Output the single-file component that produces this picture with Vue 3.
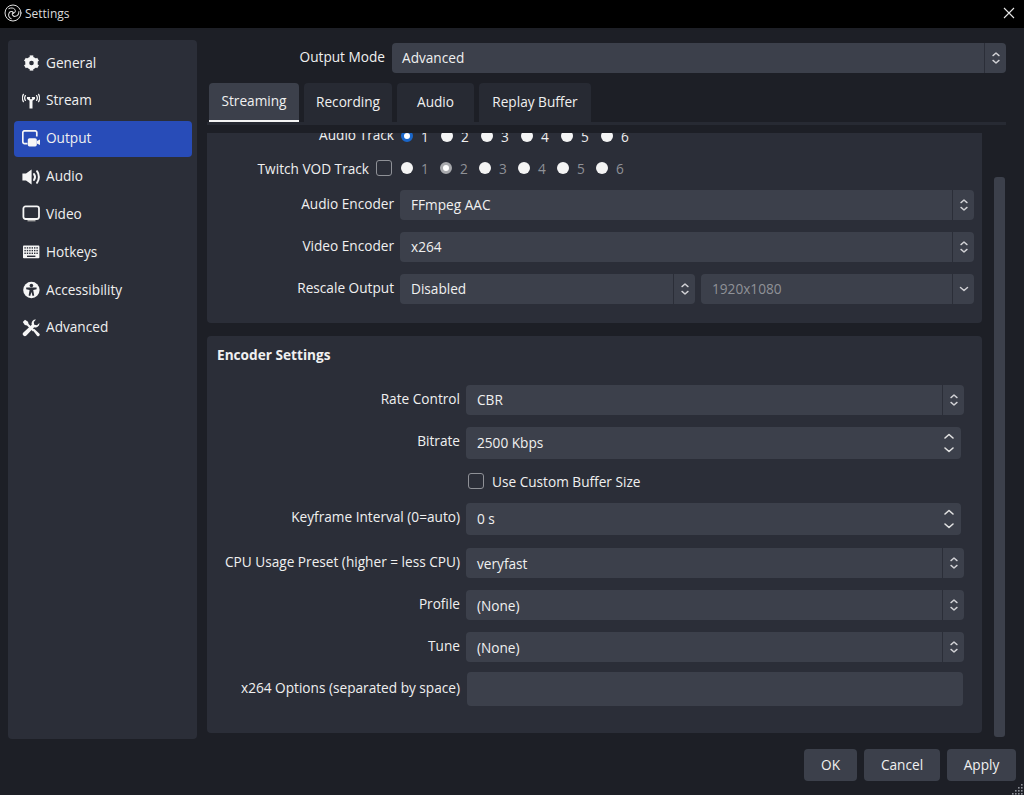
<template>
  <div class="window">
    <svg width="0" height="0" class="defs" aria-hidden="true">
      <defs>
        <g id="updown" fill="none" stroke="currentColor" stroke-width="1.4" stroke-linecap="round" stroke-linejoin="round">
          <path d="M2 5.6 L5 3 L8 5.6" />
          <path d="M2 10.4 L5 13 L8 10.4" />
        </g>
      </defs>
    </svg>

    <header class="titlebar">
      <svg class="logo" viewBox="0 0 18 18">
        <g fill="none" stroke="#e0e0e0" stroke-width="1" stroke-linecap="round">
          <circle cx="9" cy="9" r="8" />
          <path v-for="a in [0, 120, 240]" :key="a" d="M9 9.6 C11.2 9.4 12 7 10.8 5.4 C9.6 3.8 7 3.4 4.8 4.6" :transform="`rotate(${a} 9 9)`" />
        </g>
      </svg>
      <span class="windowTitle">Settings</span>
      <svg class="closeIcon" viewBox="0 0 12 12">
        <path d="M1 1 L11 11 M11 1 L1 11" stroke="#e6e6e6" stroke-width="1.1" fill="none" />
      </svg>
    </header>

    <div class="content">
      <nav class="sidebar">
        <div v-for="item in navItems" :key="item" class="navItem" :class="{ active: item === 'Output' }">
          <svg class="navIcon" viewBox="0 0 18 18">
            <template v-if="item === 'General'">
              <circle cx="9.5" cy="9" r="4.3" fill="none" stroke="#f6f6f6" stroke-width="4" />
              <g fill="#f6f6f6">
                <rect v-for="a in [0, 60, 120, 180, 240, 300]" :key="a" x="7.7" y="1.4" width="3.6" height="3" :transform="`rotate(${a} 9.5 9)`" />
              </g>
            </template>
            <template v-else-if="item === 'Stream'">
              <path d="M5 5 H13 V7 L10.5 8.8 V16.4 H7.5 V8.8 L5 7 Z" fill="#f6f6f6" />
              <circle cx="9" cy="6.2" r="1.1" fill="#2b2e38" />
              <path d="M3.4 3.6 C2.5 5 2.5 7 3.4 8.4 M14.6 3.6 C15.5 5 15.5 7 14.6 8.4 M1.4 2.4 C0 4.8 0 7.2 1.4 9.6 M16.6 2.4 C18 4.8 18 7.2 16.6 9.6" fill="none" stroke="#f0f0f0" stroke-width="1.3" stroke-linecap="round" />
            </template>
            <template v-else-if="item === 'Output'">
              <path d="M5.5 13.6 H2.6 A1.8 1.8 0 0 1 0.8 11.8 V2.6 A1.8 1.8 0 0 1 2.6 0.8 H13 A1.8 1.8 0 0 1 14.8 2.6 V6.4" fill="none" stroke="#f6f6f6" stroke-width="1.7" />
              <rect x="5.8" y="8.2" width="9" height="8.2" rx="1.6" fill="#f6f6f6" />
              <path d="M14.8 11 L18 9.6 V15 L14.8 13.6 Z" fill="#f6f6f6" />
            </template>
            <template v-else-if="item === 'Audio'">
              <path d="M0.4 5.6 H4 L9.6 1.4 V16.6 L4 12.4 H0.4 Z" fill="#f6f6f6" />
              <path d="M12 6 C13.1 7.6 13.1 10.4 12 12 M15 3.2 C17.5 6.4 17.5 11.6 15 14.8" fill="none" stroke="#f6f6f6" stroke-width="2" stroke-linecap="round" />
            </template>
            <template v-else-if="item === 'Video'">
              <rect x="1.4" y="1.4" width="15.6" height="12.6" rx="2.2" fill="none" stroke="#f6f6f6" stroke-width="1.8" />
              <rect x="5.5" y="15" width="8" height="1.4" fill="#a8a8a8" />
            </template>
            <template v-else-if="item === 'Hotkeys'">
              <rect x="1" y="2.6" width="16.4" height="12.6" rx="0.8" fill="#f6f6f6" />
              <g fill="#2b2e38">
                <rect v-for="k in keyDots" :key="k.x + '-' + k.y" :x="k.x" :y="k.y" width="1.4" height="1.4" />
                <rect x="5" y="12.6" width="8.4" height="1.4" />
              </g>
            </template>
            <template v-else-if="item === 'Accessibility'">
              <circle cx="9.4" cy="9" r="8.2" fill="#f6f6f6" />
              <circle cx="9.4" cy="4.6" r="1.8" fill="#2b2e38" />
              <path d="M4.2 6.6 L14.6 6.6 L14.6 8.2 L11.2 9 L12.2 14.6 L10.6 15 L9.4 11 L8.2 15 L6.6 14.6 L7.6 9 L4.2 8.2 Z" fill="#2b2e38" />
            </template>
            <template v-else>
              <path d="M3 0.8 L0.8 3 L2.8 6 L5 6.6 L11 12.6 L12.6 11 L6.6 5 L6 2.8 Z" fill="#f6f6f6" />
              <path d="M11 11.4 L15 16.8 A1.5 1.5 0 0 0 17.2 14.6 L12.4 10 Z" fill="#f6f6f6" />
              <path d="M14 0.6 A4 4 0 0 0 9.8 5.8 L1.4 13.6 A2 2 0 0 0 4.4 16.6 L12.2 8.2 A4 4 0 0 0 17.4 4 L15 6.2 L12.2 5.8 L11.8 3 Z" fill="#f6f6f6" />
            </template>
          </svg>
          <span>{{ item }}</span>
        </div>
      </nav>

      <main class="main">
        <div class="modeRow">
          <span class="fieldLabel">Output Mode</span>
          <div class="combo">
            <span class="comboText">Advanced</span>
            <span class="comboArrow"><svg class="chev" viewBox="0 0 10 16"><use href="#updown" /></svg></span>
          </div>
        </div>

        <div class="tabs">
          <div v-for="tab in tabs" :key="tab.name" class="tab" :class="{ current: tab.name === 'Streaming' }" :style="{ width: tab.width + 'px' }">{{ tab.name }}</div>
        </div>
        <div class="tabLine"></div>

        <div class="scrollArea">
          <div class="viewport">
            <section class="panel streamPanel">
              <div class="trackRow audioRow">
                <span class="fieldLabel">Audio Track</span>
                <div class="radios">
                  <span v-for="n in 6" :key="n" class="radioItem">
                    <i class="radio" :class="{ on: n === 1 }"></i>{{ n }}
                  </span>
                </div>
              </div>
              <div class="trackRow vodRow">
                <span class="fieldLabel"><span>Twitch VOD Track</span><i class="check"></i></span>
                <div class="radios muted">
                  <span v-for="n in 6" :key="n" class="radioItem">
                    <i class="radio" :class="{ off: n === 2 }"></i>{{ n }}
                  </span>
                </div>
              </div>
              <div class="formRow">
                <span class="fieldLabel">Audio Encoder</span>
                <div class="combo">
                  <span class="comboText">FFmpeg AAC</span>
                  <span class="comboArrow"><svg class="chev" viewBox="0 0 10 16"><use href="#updown" /></svg></span>
                </div>
              </div>
              <div class="formRow">
                <span class="fieldLabel">Video Encoder</span>
                <div class="combo">
                  <span class="comboText">x264</span>
                  <span class="comboArrow"><svg class="chev" viewBox="0 0 10 16"><use href="#updown" /></svg></span>
                </div>
              </div>
              <div class="formRow">
                <span class="fieldLabel">Rescale Output</span>
                <div class="rescale">
                  <div class="combo">
                    <span class="comboText">Disabled</span>
                    <span class="comboArrow"><svg class="chev" viewBox="0 0 10 16"><use href="#updown" /></svg></span>
                  </div>
                  <div class="combo disabled">
                    <span class="comboText">1920x1080</span>
                    <span class="comboArrow">
                      <svg class="chev" viewBox="0 0 10 16"><path d="M1.5 6.5 L5 9.5 L8.5 6.5" fill="none" stroke="currentColor" stroke-width="1.5" stroke-linecap="round" stroke-linejoin="round" /></svg>
                    </span>
                  </div>
                </div>
              </div>
            </section>

            <section class="panel encoderPanel">
              <h3 class="panelTitle">Encoder Settings</h3>
              <div class="encoderRows">
                <div v-for="row in encoderRows" :key="row.label + row.type" class="encoderRow" :class="'row-' + row.type">
                  <span class="fieldLabel">{{ row.label }}</span>
                  <div v-if="row.type === 'combo'" class="combo">
                    <span class="comboText">{{ row.value }}</span>
                    <span class="comboArrow"><svg class="chev" viewBox="0 0 10 16"><use href="#updown" /></svg></span>
                  </div>
                  <div v-else-if="row.type === 'spin'" class="spinBox">
                    <span class="comboText">{{ row.value }}</span>
                    <span class="spinArrows">
                      <svg class="spinChev" viewBox="0 0 12 8"><path d="M2 6 L6 2.5 L10 6" /></svg>
                      <svg class="spinChev" viewBox="0 0 12 8"><path d="M2 2 L6 5.5 L10 2" /></svg>
                    </span>
                  </div>
                  <label v-else-if="row.type === 'check'" class="checkField"><i class="check"></i>{{ row.value }}</label>
                  <div v-else class="textInput"></div>
                </div>
              </div>
            </section>
          </div>
          <div class="scrollTrack"><div class="scrollThumb"></div></div>
        </div>
      </main>
    </div>

    <footer class="footer">
      <button class="btn okBtn" type="button">OK</button>
      <button class="btn cancelBtn" type="button">Cancel</button>
      <button class="btn applyBtn" type="button">Apply</button>
      <svg class="grip" viewBox="0 0 12 12">
        <g fill="#8c8f96">
          <rect v-for="d in gripDots" :key="d[0] + '-' + d[1]" :x="d[0]" :y="d[1]" width="1.6" height="1.6" />
        </g>
      </svg>
    </footer>
  </div>
</template>

<script setup>
const navItems = ['General', 'Stream', 'Output', 'Audio', 'Video', 'Hotkeys', 'Accessibility', 'Advanced']

const tabs = [
  { name: 'Streaming', width: 90 },
  { name: 'Recording', width: 88 },
  { name: 'Audio', width: 77 },
  { name: 'Replay Buffer', width: 112 }
]

const encoderRows = [
  { label: 'Rate Control', type: 'combo', value: 'CBR' },
  { label: 'Bitrate', type: 'spin', value: '2500 Kbps' },
  { label: '', type: 'check', value: 'Use Custom Buffer Size' },
  { label: 'Keyframe Interval (0=auto)', type: 'spin', value: '0 s' },
  { label: 'CPU Usage Preset (higher = less CPU)', type: 'combo', value: 'veryfast' },
  { label: 'Profile', type: 'combo', value: '(None)' },
  { label: 'Tune', type: 'combo', value: '(None)' },
  { label: 'x264 Options (separated by space)', type: 'input' }
]

const keyDots = []
for (const y of [4.2, 6.9, 9.6]) {
  for (let x = 2.4; x < 15.5; x += 2.4) keyDots.push({ x, y })
}

const gripDots = [[9, 1], [6, 4], [9, 4], [3, 7], [6, 7], [9, 7], [0, 10], [3, 10], [6, 10], [9, 10]]
</script>

<style scoped>
.window {
  width: 1024px;
  height: 795px;
  display: flex;
  flex-direction: column;
  overflow: hidden;
  background: #1d1f26;
  color: #f0f0f0;
  font-family: "Open Sans", "Noto Sans", sans-serif;
  font-size: 13.65px;
}

.defs {
  position: absolute;
}

.titlebar {
  flex: none;
  height: 28px;
  display: flex;
  align-items: center;
  padding: 0 9px 2px 4px;
  box-sizing: border-box;
  background: #000;
}

.logo {
  width: 18px;
  height: 18px;
  margin-right: 3px;
}

.windowTitle {
  font-size: 12px;
  color: #dcdcdc;
}

.closeIcon {
  width: 12px;
  height: 12px;
  margin-left: auto;
}

.content {
  flex: none;
  height: 700px;
  margin-top: 12px;
  padding: 0 18px 0 8px;
  display: flex;
  gap: 10px;
}

.sidebar {
  flex: none;
  width: 189px;
  box-sizing: border-box;
  height: 699px;
  padding: 5px 5px 0 6px;
  display: flex;
  flex-direction: column;
  gap: 1.85px;
  background: #2b2e38;
  border-radius: 4px;
}

.navItem {
  height: 36px;
  display: flex;
  align-items: center;
  gap: 6px;
  padding-left: 8px;
  border-radius: 4px;
}

.navItem.active {
  background: #284cb8;
}

.navItem span {
  padding-bottom: 1px;
  margin-top: -1px;
}

.navIcon {
  flex: none;
  width: 18px;
  height: 18px;
}

.main {
  flex: 1;
  min-width: 0;
  display: flex;
  flex-direction: column;
}

.modeRow {
  margin-top: 3px;
  display: grid;
  grid-template-columns: 178px minmax(0, 1fr);
  column-gap: 7px;
  align-items: center;
}

.fieldLabel {
  text-align: right;
  padding-bottom: 3px;
  white-space: nowrap;
}

.combo {
  height: 30px;
  display: flex;
  align-items: stretch;
  background: #3c404b;
  border-radius: 4px;
  overflow: hidden;
}

.comboText {
  flex: 1;
  align-self: center;
  padding: 0 0 1px 10px;
  white-space: nowrap;
}

.panel .comboText {
  padding-left: 11px;
}

.row-spin ~ .row-combo .comboText {
  padding-bottom: 0;
  padding-top: 1px;
}

.comboArrow {
  flex: none;
  width: 21px;
  display: flex;
  align-items: center;
  justify-content: center;
  border-left: 1px solid #2b2e38;
  color: #d0d0d4;
}

.chev {
  width: 10px;
  height: 16px;
}

.disabled .comboText {
  color: #8f9197;
}

.tabs {
  margin-top: 10px;
  padding-left: 2px;
  display: flex;
  gap: 5px;
}

.tab {
  height: 39px;
  display: flex;
  align-items: center;
  justify-content: center;
  padding-bottom: 3px;
  box-sizing: border-box;
  background: #272a33;
  border-radius: 4px 4px 0 0;
}

.tab.current {
  background: #3c404b;
  border-bottom: 2px solid #f4f4f4;
}

.tabLine {
  flex: none;
  height: 3px;
  background: #272a33;
}

.scrollArea {
  flex: 1;
  min-height: 0;
  margin-top: 8px;
  display: flex;
}

.viewport {
  width: 775px;
  flex: none;
  display: flex;
  flex-direction: column;
  gap: 13px;
  overflow: hidden;
}

.panel {
  background: #2b2e38;
  border-radius: 4px;
  flex: none;
}

.streamPanel {
  height: 190px;
  padding-right: 8px;
  overflow: hidden;
  border-radius: 0 0 4px 4px;
}

.trackRow {
  display: grid;
  grid-template-columns: 187px minmax(0, 1fr);
  column-gap: 6px;
  align-items: center;
}

.audioRow {
  height: 22px;
  margin-top: -8px;
}

.vodRow {
  height: 22px;
  margin-top: 10px;
}

.vodRow .fieldLabel {
  display: flex;
  justify-content: flex-end;
  align-items: center;
  gap: 7px;
  padding-right: 2px;
  padding-bottom: 0;
}

.radios {
  display: flex;
  padding-left: 1px;
}

.radioItem {
  width: 40px;
  display: flex;
  align-items: center;
  gap: 8px;
}

.muted {
  color: #8f9197;
}

.muted .radioItem {
  width: 39px;
}

.radio {
  width: 12px;
  height: 12px;
  border-radius: 50%;
  background: #f4f4f4;
  box-sizing: border-box;
}

.radio.on {
  background: #fff;
  border: 3.5px solid #1a66c9;
}

.radio.off {
  background: #fff;
  border: 3.5px solid #a8a9ad;
}

.check {
  flex: none;
  display: inline-block;
  width: 16px;
  height: 16px;
  box-sizing: border-box;
  border: 1.5px solid #8f9197;
  border-radius: 3px;
}

.formRow {
  margin-top: 12px;
  display: grid;
  grid-template-columns: 187px minmax(0, 1fr);
  column-gap: 6px;
  align-items: center;
}

.trackRow + .formRow {
  margin-top: 11px;
}

.rescale {
  display: flex;
  gap: 6px;
}

.rescale .combo:first-child {
  width: 295px;
  flex: none;
}

.rescale .combo:last-child {
  flex: 1;
}

.encoderPanel {
  height: 397px;
  padding-right: 18px;
}

.panelTitle {
  margin: 0;
  padding: 9px 0 0 10px;
  height: 40px;
  box-sizing: border-box;
  font-size: 13.65px;
  font-weight: 700;
}

.encoderRows {
  margin-top: 9px;
  display: flex;
  flex-direction: column;
  gap: 12px;
}

.encoderRow {
  display: grid;
  grid-template-columns: 253px minmax(0, 1fr);
  column-gap: 6px;
  align-items: center;
}

.row-spin .fieldLabel {
  padding-bottom: 5px;
}

.spinBox {
  height: 32px;
  margin-right: 3px;
  display: flex;
  align-items: center;
  background: #3c404b;
  border-radius: 4px;
}

.row-check + .row-spin {
  margin-bottom: 1px;
}

.row-input {
  margin-top: -2px;
}

.spinArrows {
  flex: none;
  width: 24px;
  display: flex;
  flex-direction: column;
  align-items: center;
  gap: 6px;
}

.spinChev {
  width: 12px;
  height: 8px;
  fill: none;
  stroke: #e2e2e2;
  stroke-width: 1.6;
  stroke-linecap: round;
  stroke-linejoin: round;
}

.checkField {
  height: 20px;
  display: flex;
  align-items: center;
  gap: 8px;
  padding-left: 2px;
  white-space: nowrap;
}

.textInput {
  height: 34px;
  margin: 0 1px;
  background: #3c404b;
  border-radius: 4px;
}

.scrollTrack {
  flex: none;
  width: 11px;
  margin-left: 12px;
  padding: 44px 0 3px;
  box-sizing: border-box;
  display: flex;
}

.scrollThumb {
  flex: 1;
  background: #3c404b;
  border-radius: 3px;
}

.footer {
  position: relative;
  flex: none;
  margin-top: 9px;
  padding-right: 8px;
  display: flex;
  justify-content: flex-end;
  gap: 7px;
}

.btn {
  height: 32px;
  border: 0;
  border-radius: 4px;
  background: #3c404b;
  color: #f0f0f0;
  font: inherit;
  padding: 0 0 2px;
}

.okBtn { width: 53px; }
.cancelBtn { width: 76px; }
.applyBtn { width: 69px; }

.grip {
  position: absolute;
  right: 0;
  top: 34px;
  width: 12px;
  height: 12px;
}
</style>
